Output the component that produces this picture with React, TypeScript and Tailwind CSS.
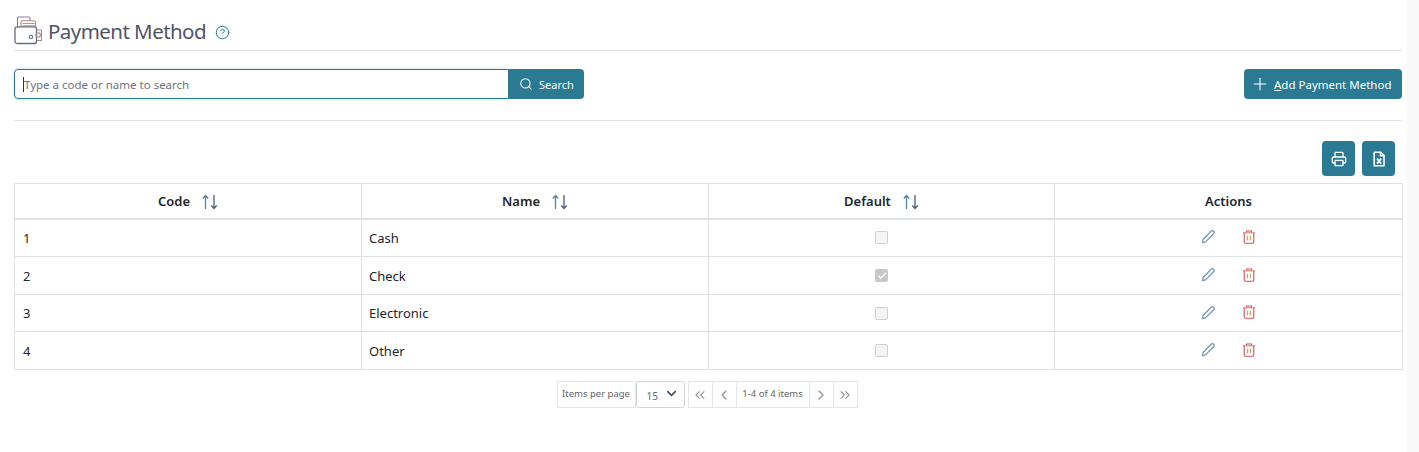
import React from 'react';
import { Search, Plus, Printer, ChevronDown, ChevronLeft, ChevronRight, ChevronsLeft, ChevronsRight, CircleHelp, Check } from 'lucide-react';

const rows = [
  { code: '1', name: 'Cash', isDefault: false, height: 'h-[38px]' },
  { code: '2', name: 'Check', isDefault: true, height: 'h-[38px]' },
  { code: '3', name: 'Electronic', isDefault: false, height: 'h-[37px]' },
  { code: '4', name: 'Other', isDefault: false, height: 'h-[38px]' },
];

const SortIcon = () => (
  <svg width="16" height="16" viewBox="0 0 16 16" fill="none" strokeWidth="1.3" className="ml-3 inline-block align-middle">
    <path d="M3.5 15V1.5M0.8 4.5L3.5 1.5L6.2 4.5" stroke="#4f86a3" />
    <path d="M12 1V14.5M9.3 11.5L12 14.5L14.7 11.5" stroke="#4a5f7c" />
  </svg>
);

const PencilIcon = () => (
  <svg width="15" height="15" viewBox="0 0 16 16" fill="none" stroke="#6f93b8" strokeWidth="1.25" strokeLinejoin="round">
    <path d="M2.2 11.2L10.8 2.4C11.6 1.6 12.7 1.6 13.5 2.4C14.3 3.2 14.3 4.3 13.5 5.1L4.8 13.8L1.6 14.5L2.2 11.2Z" />
  </svg>
);

const TrashIcon = () => (
  <svg width="14" height="14" viewBox="0 0 14 14" fill="none" stroke="#d64f62" strokeWidth="1.1">
    <path d="M0.8 2.8H13.2" stroke="#d9836f" />
    <path d="M4.5 2.6V1H9.5V2.6" />
    <path d="M2.2 3V12C2.2 12.7 2.8 13.2 3.4 13.2H10.6C11.2 13.2 11.8 12.7 11.8 12V3" />
    <path d="M5.5 5.8V10.4" stroke="#d9a05f" strokeWidth="1.3" />
    <path d="M8.5 5.8V10.4" stroke="#d9a05f" strokeWidth="1.3" />
  </svg>
);

const WalletIcon = () => (
  <svg width="28" height="30" viewBox="0 0 28 30" fill="none" strokeWidth="1.1" className="-mt-[3px]">
    <path d="M3.5 13V3.5C3.5 2.7 4.1 2 4.9 2H14.5C15.3 2 16 2.7 16 3.5V5.5" stroke="#8b7fa8" />
    <path d="M7 12.5V7C7 6.3 7.6 5.7 8.3 5.7H20.2C20.9 5.7 21.5 6.3 21.5 7V12.5" stroke="#b9866f" />
    <path d="M8.5 8.5H20.5M8.5 10.8H20.5" stroke="#9a9aa8" />
    <path d="M1 13.8C1 12.7 1.9 11.8 3 11.8H20.5C21.6 11.8 22.5 12.7 22.5 13.8V26.5C22.5 27.6 21.6 28.5 20.5 28.5H3C1.9 28.5 1 27.6 1 26.5V13.8Z" stroke="#6f6a80" strokeWidth="1.3" />
    <path d="M22.5 15H27.5V25.5H22.5" stroke="#9a8f86" />
    <circle cx="24.2" cy="20" r="2.2" stroke="#9a8f86" />
    <circle cx="17" cy="22" r="1.7" stroke="#4f7f9a" />
  </svg>
);

const ExcelIcon = () => (
  <svg width="16" height="16" viewBox="0 0 16 16" fill="none" stroke="white" strokeWidth="1.6">
    <path d="M3.2 1.2H9.8L13 4.4V14.8H3.2V1.2Z" strokeLinejoin="round" />
    <path d="M9.5 1.4V4.8H12.8" />
    <path d="M6 7.5L10.2 12.6M10.2 7.5L6 12.6" strokeWidth="1.8" />
  </svg>
);

export default function App() {
  return (
    <div className="flex h-[452px] overflow-hidden bg-white font-['Noto_Sans','Open_Sans',sans-serif] text-[#212529]">
      <div className="w-[1407px] pl-[14px] pr-[5px]">
        {/* Title */}
        <div className="flex h-[51px] items-center border-b border-[#dcdce6] pt-[12px]">
          <WalletIcon />
          <h1 className="ml-[6px] text-[20.5px] leading-none tracking-[-0.55px] text-[#4f5468]">Payment Method</h1>
          <CircleHelp size={15} strokeWidth={1.6} className="ml-[9px] mt-[2px] text-[#2b7a94]" />
        </div>

        {/* Search bar */}
        <div className="flex h-[70px] items-center justify-between border-b border-[#e2e2e6] pb-[3px]">
          <div className="flex h-[30px]">
            <div className="flex w-[495px] items-center rounded-l-[4px] border border-[#2b7a94] pl-[8px] text-[11.5px] text-[#6c757d] shadow-[0_0_3px_rgba(43,122,148,0.35)]">
              <span className="h-[15px] w-px bg-[#333]" />
              <span className="pt-[2px]">Type a code or name to search</span>
            </div>
            <button className="flex w-[75px] items-center justify-center gap-[6px] rounded-r-[4px] bg-[#2b7a94] text-[11px] text-white">
              <Search size={14} strokeWidth={1.8} />
              <span className="pt-[2px]">Search</span>
            </button>
          </div>
          <button className="flex h-[30px] w-[158px] items-center gap-[4px] rounded-[4px] bg-[#2b7a94] pl-[6px] text-[11.5px] text-white">
            <Plus size={20} strokeWidth={1.3} />
            <span className="pt-[2px]"><span className="underline">A</span>dd Payment Method</span>
          </button>
        </div>

        {/* Export actions */}
        <div className="flex justify-end gap-[7px] pr-[7px] pt-[20px] pb-[7px]">
          <button className="flex h-[35px] w-[33px] items-center justify-center rounded-[4px] bg-[#2b7a94] text-white">
            <Printer size={16} strokeWidth={2} />
          </button>
          <button className="flex h-[35px] w-[33px] items-center justify-center rounded-[4px] bg-[#2b7a94]">
            <ExcelIcon />
          </button>
        </div>

        {/* Table */}
        <table className="w-[1388px] table-fixed border-collapse text-[13px]">
          <colgroup>
            <col className="w-[347px]" />
            <col className="w-[347px]" />
            <col className="w-[346px]" />
            <col className="w-[348px]" />
          </colgroup>
          <thead>
            <tr className="h-[35px]">
              {['Code', 'Name', 'Default'].map((h) => (
                <th key={h} className="border border-b-[2px] border-[#dee2e6] pt-[2px] font-semibold">
                  {h}
                  <SortIcon />
                </th>
              ))}
              <th className="border border-b-[2px] border-[#dee2e6] pt-[2px] font-semibold">Actions</th>
            </tr>
          </thead>
          <tbody>
            {rows.map((r) => (
              <tr key={r.code} className={r.height}>
                <td className="border border-[#dee2e6] px-[8px] pt-[2px]">{r.code}</td>
                <td className="border border-[#dee2e6] px-[7px] pt-[2px]">{r.name}</td>
                <td className="border border-[#dee2e6]">
                  <div className="flex justify-center">
                    {r.isDefault ? (
                      <span className="flex h-[13px] w-[13px] items-center justify-center rounded-[2px] bg-[#c8c8c8]">
                        <Check size={10} strokeWidth={3} className="text-white" />
                      </span>
                    ) : (
                      <span className="h-[13px] w-[13px] rounded-[2px] border border-[#d0d0d0] bg-[#f5f5f5]" />
                    )}
                  </div>
                </td>
                <td className="border border-[#dee2e6]">
                  <div className="-mt-[2px] flex items-center justify-center gap-[26px]">
                    <PencilIcon />
                    <TrashIcon />
                  </div>
                </td>
              </tr>
            ))}
          </tbody>
        </table>

        {/* Pagination */}
        <div className="mt-[11px] flex h-[27px] justify-center pr-[2px] text-[9.5px] text-[#5f6470]">
          <div className="flex w-[79px] items-center justify-center border border-[#e4e6ea]">Items per page</div>
          <div className="flex w-[49px] items-center justify-between rounded-[3px] border border-[#ced4da] pl-[10px] pr-[5px]">
            <span className="mt-[3px] text-[10px]">15</span>
            <ChevronDown size={15} strokeWidth={2.5} className="-mt-[3px] text-[#444b5c]" />
          </div>
          <div className="ml-[3px] flex border border-[#e4e6ea] text-[#8d929e]">
            <span className="flex w-[24px] items-center justify-center border-r border-[#e4e6ea]"><ChevronsLeft size={16} strokeWidth={1.6} /></span>
            <span className="flex w-[24px] items-center justify-center border-r border-[#e4e6ea]"><ChevronLeft size={16} strokeWidth={1.8} /></span>
            <span className="flex w-[73px] items-center justify-center border-r border-[#e4e6ea] text-[#5f6470]">1-4 of 4 items</span>
            <span className="flex w-[24px] items-center justify-center border-r border-[#e4e6ea]"><ChevronRight size={16} strokeWidth={1.8} /></span>
            <span className="flex w-[23px] items-center justify-center"><ChevronsRight size={16} strokeWidth={1.6} /></span>
          </div>
        </div>
      </div>
      <div className="w-[12px] bg-[#f8f8f8]" />
    </div>
  );
}
